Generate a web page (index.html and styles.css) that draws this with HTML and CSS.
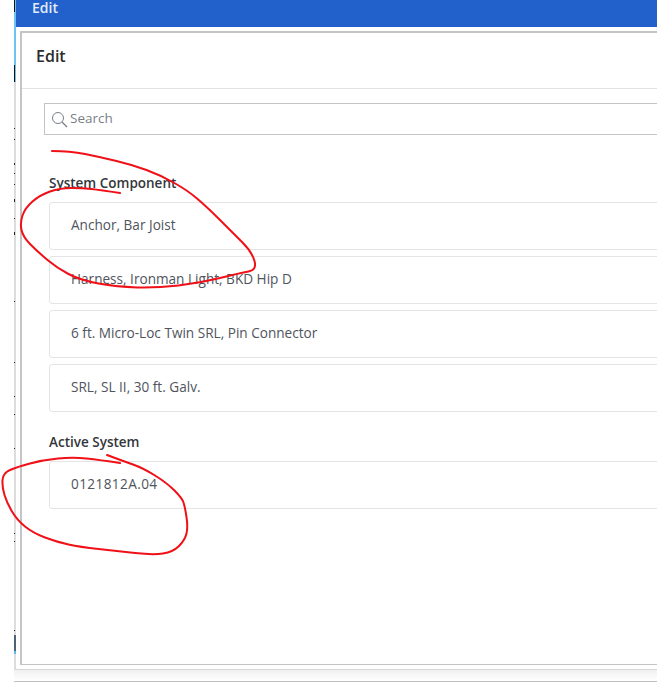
FILE: index.html
```html
<!DOCTYPE html>
<html lang="en">
<head>
<meta charset="utf-8">
<title>Edit</title>
<link rel="stylesheet" href="styles.css">
</head>
<body>
<div class="screen">
  <svg class="strip" width="2" height="670" viewBox="0 0 2 670" aria-hidden="true">
    <rect x="0" y="0" width="2" height="670" fill="#dcdcdc"/>
    <rect x="0" y="0" width="1" height="12" fill="#111"/>
    <rect x="1" y="0" width="1" height="12" fill="#6cc4f0"/>
    <rect x="0" y="12" width="2" height="53" fill="#6cc4f0"/>
    <rect x="0" y="65" width="1" height="17" fill="#111"/>
    <rect x="1" y="65" width="1" height="17" fill="#6cc4f0"/>
    <g fill="#222">
      <rect x="0" y="128" width="1" height="1"/><rect x="0" y="139" width="1" height="1"/>
      <rect x="0" y="163" width="1" height="2"/><rect x="0" y="173" width="1" height="1"/>
      <rect x="0" y="184" width="1" height="1"/><rect x="0" y="199" width="1" height="3"/>
      <rect x="0" y="218" width="1" height="1"/><rect x="0" y="232" width="1" height="3"/>
      <rect x="0" y="301" width="1" height="1"/><rect x="0" y="362" width="1" height="1"/>
      <rect x="0" y="396" width="1" height="1"/><rect x="0" y="414" width="1" height="1"/>
      <rect x="0" y="448" width="1" height="1"/><rect x="0" y="533" width="1" height="1"/>
      <rect x="0" y="541" width="1" height="1"/><rect x="0" y="630" width="1" height="1"/>
    </g>
    <rect x="0" y="635" width="2" height="16" fill="#4f6375"/>
    <rect x="0" y="651" width="2" height="3" fill="#5cbcf0"/>
  </svg>
  <div class="window">
    <div class="titlebar">Edit</div>
    <div class="panel">
      <h1 class="panel-title">Edit</h1>
      <div class="panel-body">
        <div class="search">
          <svg class="search-icon" width="17" height="17" viewBox="0 0 17 17" aria-hidden="true">
            <circle cx="7" cy="7" r="5.500" fill="none" stroke="#7a7f87" stroke-width="1"/>
            <path d="M11 11l5 5" stroke="#7a7f87" stroke-width="1.200" fill="none"/>
          </svg>
          <span class="search-text">Search</span>
        </div>
        <h2 class="group-label first">System Component</h2>
        <div class="list">
          <div class="row">Anchor, Bar Joist</div>
          <div class="row">Harness, Ironman Light, BKD Hip D</div>
          <div class="row">6 ft. Micro-Loc Twin SRL, Pin Connector</div>
          <div class="row">SRL, SL II, 30 ft. Galv.</div>
        </div>
        <h2 class="group-label second">Active System</h2>
        <div class="list">
          <div class="row code">0121812A.04</div>
        </div>
      </div>
    </div>
  </div>
</div>
<div class="shadow-line"></div>
<svg class="ink" width="657" height="685" viewBox="0 0 657 685" aria-hidden="true">
  <path d="M52 151Q70 151 85 154Q100 157 116.500 161Q133 165 146.500 170Q160 175 173.500 182.500Q187 190 197 198.500Q207 207 220 220Q233 233 242.500 242.500Q252 252 254.500 261Q257 270 248.500 271.500Q240 273 220 278Q200 283 178.500 285.500Q157 288 137 287.500Q117 287 98.500 283.500Q80 280 68.500 274Q57 268 47.500 260Q38 252 30.500 244.500Q23 237 21.500 230Q20 223 22.500 215.500Q25 208 32.500 201.500Q40 195 50 191.500Q60 188 71.500 188Q83 188 91.500 189Q100 190 120 193"/>
  <path d="M120 463Q100 460 86.500 458.500Q73 457 58 458.500Q43 460 30 463.500Q17 467 10 470Q3 473 2.500 480Q2 487 4.500 495Q7 503 12 511.500Q17 520 25 526.500Q33 533 45 537.500Q57 542 68.500 544.500Q80 547 98.500 549Q117 551 135 553Q153 555 163 553.500Q173 552 179 546Q185 540 186.500 533.500Q188 527 186.500 517Q185 507 183.500 502.500Q182 498 174.500 490.500Q167 483 155 475.500Q143 468 133 464.500Q123 461 107 455"/>
</svg>
</body>
</html>
```

FILE: styles.css
```css
* {
  box-sizing: border-box;
}

html,
body {
  margin: 0;
  padding: 0;
  height: 685px;
  overflow: hidden;
  background: #fff;
}

body {
  position: relative;
  font-family: "Open Sans", "Noto Sans", sans-serif;
  color: #3c4048;
}

.screen {
  display: flex;
  padding-left: 14px;
  height: 670px;
}

.strip {
  flex: none;
  display: block;
}

.window {
  width: 720px;
  flex: none;
  height: 670px;
  border-bottom: 1px solid #d8d8d8;
}

.titlebar {
  height: 27px;
  background: #2260cc;
  color: #e4ecfa;
  font-size: 14px;
  font-weight: 600;
  line-height: 16px;
  padding-left: 16px;
}

.panel {
  margin: 4px 0 0 4px;
  height: 634px;
  border: 1px solid #c4c4c4;
  border-left-width: 2px;
  border-top-width: 2px;
}

.panel-title {
  margin: 0;
  height: 56px;
  padding: 13px 0 0 14px;
  font-size: 16px;
  line-height: 20px;
  font-weight: 600;
  color: #2b2b2b;
  border-bottom: 1px solid #e2e2e2;
}

.panel-body {
  padding: 14px 0 0 22px;
}

.search {
  display: flex;
  align-items: center;
  gap: 2px;
  height: 32px;
  padding-left: 6px;
  padding-bottom: 2px;
  border: 1px solid #c4c4c4;
}

.search-icon {
  flex: none;
  margin-top: 2px;
}

.search-text {
  font-size: 13.500px;
  color: #7a7f87;
}

.group-label {
  margin: 0;
  margin-left: 5px;
  font-size: 13.500px;
  line-height: 18px;
  font-weight: 600;
  color: #33363c;
}

.group-label.first {
  margin-top: 39px;
  margin-bottom: 10px;
}

.group-label.second {
  margin-top: 21px;
  margin-bottom: 10px;
}

.list {
  display: flex;
  flex-direction: column;
  gap: 6px;
  margin-left: 5px;
}

.row {
  height: 48px;
  padding-left: 21px;
  border: 1px solid #e4e4e4;
  border-radius: 3px;
  font-size: 13.600px;
  line-height: 43px;
  color: #50545d;
}

.row.code {
  letter-spacing: 0.4px;
}

.shadow-line {
  height: 12px;
  margin-left: 14px;
  border-bottom: 1px solid #c0c0c0;
  background: linear-gradient(#f0f0f0, #fff);
}

.ink {
  position: absolute;
  left: 0;
  top: 0;
  pointer-events: none;
}

.ink path {
  fill: none;
  stroke: #f01018;
  stroke-width: 2;
  stroke-linecap: round;
  stroke-linejoin: round;
}
```
